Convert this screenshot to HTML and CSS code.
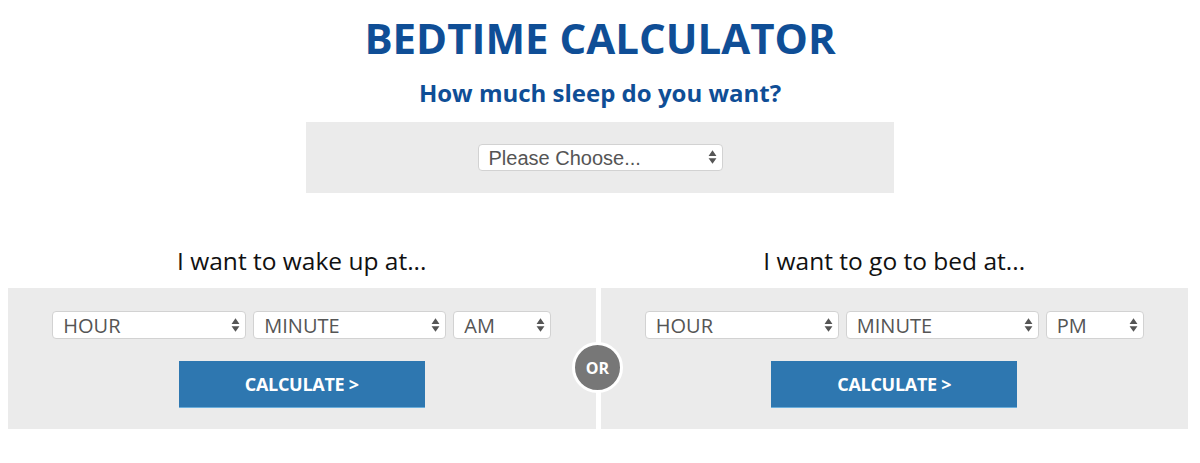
FILE: index.html
```html
<!DOCTYPE html>
<html lang="en">
<head>
  <meta charset="UTF-8" />
  <title>Bedtime Calculator</title>
  <link rel="stylesheet" href="styles.css">
</head>
<body>
  <h1 class="title">BEDTIME CALCULATOR</h1>
  <h2 class="subtitle">How much sleep do you want?</h2>

  <div class="sleep-box">
    <div class="select-wrap choose">
      <select>
        <option>Please Choose...</option>
      </select>
      <svg class="arrows" viewBox="0 0 8 14"><path d="M4 1 L7.5 6 H0.5 Z M4 13 L7.5 8 H0.5 Z"/></svg>
    </div>
  </div>

  <div class="calc-row">
    <div class="col">
      <h3>I want to wake up at...</h3>
      <div class="calc-box">
        <div class="selects">
          <div class="select-wrap hour">
            <select><option>HOUR</option></select>
            <svg class="arrows" viewBox="0 0 8 14"><path d="M4 1 L7.5 6 H0.5 Z M4 13 L7.5 8 H0.5 Z"/></svg>
          </div>
          <div class="select-wrap minute">
            <select><option>MINUTE</option></select>
            <svg class="arrows" viewBox="0 0 8 14"><path d="M4 1 L7.5 6 H0.5 Z M4 13 L7.5 8 H0.5 Z"/></svg>
          </div>
          <div class="select-wrap ampm">
            <select><option>AM</option><option>PM</option></select>
            <svg class="arrows" viewBox="0 0 8 14"><path d="M4 1 L7.5 6 H0.5 Z M4 13 L7.5 8 H0.5 Z"/></svg>
          </div>
        </div>
        <button class="calc-btn">CALCULATE &gt;</button>
      </div>
    </div>

    <div class="col">
      <h3>I want to go to bed at...</h3>
      <div class="calc-box">
        <div class="selects">
          <div class="select-wrap hour">
            <select><option>HOUR</option></select>
            <svg class="arrows" viewBox="0 0 8 14"><path d="M4 1 L7.5 6 H0.5 Z M4 13 L7.5 8 H0.5 Z"/></svg>
          </div>
          <div class="select-wrap minute">
            <select><option>MINUTE</option></select>
            <svg class="arrows" viewBox="0 0 8 14"><path d="M4 1 L7.5 6 H0.5 Z M4 13 L7.5 8 H0.5 Z"/></svg>
          </div>
          <div class="select-wrap ampm">
            <select><option>PM</option><option>AM</option></select>
            <svg class="arrows" viewBox="0 0 8 14"><path d="M4 1 L7.5 6 H0.5 Z M4 13 L7.5 8 H0.5 Z"/></svg>
          </div>
        </div>
        <button class="calc-btn">CALCULATE &gt;</button>
      </div>
    </div>

    <div class="or-badge">OR</div>
  </div>
</body>
</html>
```

FILE: styles.css
```css
body {
  margin: 0;
  background: #fff;
  font-family: "Open Sans", "Liberation Sans", sans-serif;
  color: #1a1a1a;
}
.title {
  margin: 14px 0 0;
  font-size: 42px;
  line-height: 48px;
  font-weight: 700;
  text-align: center;
  color: #0f4e96;
}
.subtitle {
  margin: 16px 0 0;
  font-size: 24px;
  line-height: 30px;
  font-weight: 700;
  text-align: center;
  color: #0f4e96;
}
.sleep-box {
  width: 588px;
  height: 71px;
  margin: 14px auto 0;
  background: #ebebeb;
  display: flex;
  align-items: center;
  justify-content: center;
}
.select-wrap {
  position: relative;
  height: 28px;
}
.select-wrap select {
  appearance: none;
  -webkit-appearance: none;
  width: 100%;
  height: 100%;
  background: #fff;
  border: 1px solid #d2d2d2;
  border-radius: 4px;
  padding: 0 10px;
  font-family: "Open Sans", "Liberation Sans", sans-serif;
  font-size: 20px;
  color: #555;
  outline: none;
}
.select-wrap .arrows {
  position: absolute;
  right: 6px;
  top: 6px;
  width: 9px;
  height: 16px;
  fill: #555;
  pointer-events: none;
}
.choose {
  width: 245px;
  height: 27px;
}
.choose select {
  font-family: "Liberation Sans", Arial, sans-serif;
  font-size: 20px;
}
.choose .arrows {
  top: 5px;
}
.calc-row {
  position: relative;
  display: grid;
  grid-template-columns: 1fr 1fr;
  column-gap: 5px;
  margin: 53px 12px 0 8px;
}
.col h3 {
  margin: 0 0 12px;
  font-size: 24.5px;
  line-height: 30px;
  font-weight: 400;
  text-align: center;
  color: #111;
}
.calc-box {
  background: #ebebeb;
  height: 141px;
  padding-top: 23px;
  box-sizing: border-box;
  display: flex;
  flex-direction: column;
  align-items: center;
}
.selects {
  display: flex;
  gap: 7px;
}
.hour {
  width: 194px;
}
.minute {
  width: 193px;
}
.ampm {
  width: 98px;
}
.calc-btn {
  margin-top: 22px;
  width: 246px;
  height: 47px;
  background: #2e77b0;
  border: none;
  border-bottom: 1px solid #6aaedc;
  color: #fff;
  font-family: "Open Sans", "Liberation Sans", sans-serif;
  font-size: 18px;
  font-weight: 700;
  letter-spacing: -0.3px;
  cursor: pointer;
}
.or-badge {
  position: absolute;
  left: 50%;
  top: 96px;
  width: 45px;
  height: 45px;
  margin-left: -26px;
  border: 3px solid #fff;
  border-radius: 50%;
  background: #777;
  color: #fff;
  font-size: 16px;
  font-weight: 700;
  display: flex;
  align-items: center;
  justify-content: center;
}
```
